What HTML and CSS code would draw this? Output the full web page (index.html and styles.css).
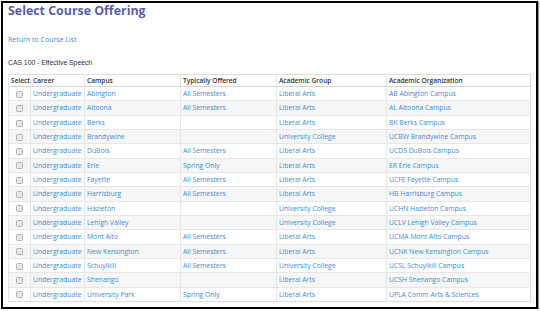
FILE: index.html
```html
<!DOCTYPE html>
<html lang="en">
<head>
    <meta charset="UTF-8">
    <title>Select Course Offering</title>
    <link rel="stylesheet" href="styles.css">
</head>
<body>
    <div class="frame">
        <h1 class="page-title">Select Course Offering</h1>
        <a class="back-link" href="#">Return to Course List</a>
        <p class="course-name">CAS 100 - Effective Speech</p>

        <table class="offerings">
            <thead>
                <tr>
                    <th class="col-select">Select</th>
                    <th class="col-career">Career</th>
                    <th class="col-campus">Campus</th>
                    <th class="col-offered">Typically Offered</th>
                    <th class="col-group">Academic Group</th>
                    <th>Academic Organization</th>
                </tr>
            </thead>
            <tbody>
                <tr><td class="col-select"><span class="check"></span></td><td><a href="#">Undergraduate</a></td><td><a href="#">Abington</a></td><td><a href="#">All Semesters</a></td><td><a href="#">Liberal Arts</a></td><td><a href="#">AB Abington Campus</a></td></tr>
                <tr><td class="col-select"><span class="check"></span></td><td><a href="#">Undergraduate</a></td><td><a href="#">Altoona</a></td><td><a href="#">All Semesters</a></td><td><a href="#">Liberal Arts</a></td><td><a href="#">AL Altoona Campus</a></td></tr>
                <tr><td class="col-select"><span class="check"></span></td><td><a href="#">Undergraduate</a></td><td><a href="#">Berks</a></td><td></td><td><a href="#">Liberal Arts</a></td><td><a href="#">BK Berks Campus</a></td></tr>
                <tr><td class="col-select"><span class="check"></span></td><td><a href="#">Undergraduate</a></td><td><a href="#">Brandywine</a></td><td></td><td><a href="#">University College</a></td><td><a href="#">UCBW Brandywine Campus</a></td></tr>
                <tr><td class="col-select"><span class="check"></span></td><td><a href="#">Undergraduate</a></td><td><a href="#">DuBois</a></td><td><a href="#">All Semesters</a></td><td><a href="#">Liberal Arts</a></td><td><a href="#">UCDS DuBois Campus</a></td></tr>
                <tr><td class="col-select"><span class="check"></span></td><td><a href="#">Undergraduate</a></td><td><a href="#">Erie</a></td><td><a href="#">Spring Only</a></td><td><a href="#">Liberal Arts</a></td><td><a href="#">ER Erie Campus</a></td></tr>
                <tr><td class="col-select"><span class="check"></span></td><td><a href="#">Undergraduate</a></td><td><a href="#">Fayette</a></td><td><a href="#">All Semesters</a></td><td><a href="#">Liberal Arts</a></td><td><a href="#">UCFE Fayette Campus</a></td></tr>
                <tr><td class="col-select"><span class="check"></span></td><td><a href="#">Undergraduate</a></td><td><a href="#">Harrisburg</a></td><td><a href="#">All Semesters</a></td><td><a href="#">Liberal Arts</a></td><td><a href="#">HB Harrisburg Campus</a></td></tr>
                <tr><td class="col-select"><span class="check"></span></td><td><a href="#">Undergraduate</a></td><td><a href="#">Hazleton</a></td><td></td><td><a href="#">University College</a></td><td><a href="#">UCHN Hazleton Campus</a></td></tr>
                <tr><td class="col-select"><span class="check"></span></td><td><a href="#">Undergraduate</a></td><td><a href="#">Lehigh Valley</a></td><td></td><td><a href="#">University College</a></td><td><a href="#">UCLV Lehigh Valley Campus</a></td></tr>
                <tr><td class="col-select"><span class="check"></span></td><td><a href="#">Undergraduate</a></td><td><a href="#">Mont Alto</a></td><td><a href="#">All Semesters</a></td><td><a href="#">Liberal Arts</a></td><td><a href="#">UCMA Mont Alto Campus</a></td></tr>
                <tr><td class="col-select"><span class="check"></span></td><td><a href="#">Undergraduate</a></td><td><a href="#">New Kensington</a></td><td><a href="#">All Semesters</a></td><td><a href="#">Liberal Arts</a></td><td><a href="#">UCNK New Kensington Campus</a></td></tr>
                <tr><td class="col-select"><span class="check"></span></td><td><a href="#">Undergraduate</a></td><td><a href="#">Schuylkill</a></td><td><a href="#">All Semesters</a></td><td><a href="#">University College</a></td><td><a href="#">UCSL Schuylkill Campus</a></td></tr>
                <tr><td class="col-select"><span class="check"></span></td><td><a href="#">Undergraduate</a></td><td><a href="#">Shenango</a></td><td></td><td><a href="#">Liberal Arts</a></td><td><a href="#">UCSH Shenango Campus</a></td></tr>
                <tr><td class="col-select"><span class="check"></span></td><td><a href="#">Undergraduate</a></td><td><a href="#">University Park</a></td><td><a href="#">Spring Only</a></td><td><a href="#">Liberal Arts</a></td><td><a href="#">UPLA Comm Arts &amp; Sciences</a></td></tr>
            </tbody>
        </table>
    </div>
</body>
</html>
```

FILE: styles.css
```css
body {
    margin: 0;
    background: #fff;
    font-family: "Open Sans", sans-serif;
}

.frame {
    box-sizing: border-box;
    height: 308px;
    margin: 1px 2px 0 1px;
    padding: 0 5px;
    border: 2px solid #000;
    box-shadow: 1px 1px 1px #999;
}

.page-title {
    margin: 0;
    font-size: 12.4px;
    line-height: 16px;
    font-weight: 700;
    color: #585fa6;
}

.back-link {
    display: block;
    margin-top: 16px;
    font-size: 7px;
    line-height: 9px;
    color: #3c8dd0;
    text-decoration: none;
}

.course-name {
    margin: 14px 0 0;
    font-family: "Liberation Sans", Arial, sans-serif;
    font-size: 6.8px;
    line-height: 9px;
    color: #333;
}

/* Offerings table */
.offerings {
    width: 523px;
    margin-top: 7px;
    border-collapse: collapse;
    table-layout: fixed;
    border: 1px solid #ddd;
    font-size: 6.8px;
}

.offerings th,
.offerings td {
    box-sizing: border-box;
    padding: 0 2px;
    text-align: left;
    white-space: nowrap;
    border-left: 1px solid #e6e6e6;
}

.offerings th {
    height: 12px;
    font-size: 6.6px;
    font-weight: 600;
    color: #333;
    border-bottom: 1px solid #d6d6d6;
}

.offerings td {
    height: 14.33px;
    border-top: 1px solid #e6e6e6;
}

.offerings tbody tr:nth-child(even) {
    background: #f6f6f6;
}

.offerings a {
    color: #3c8dd0;
    text-decoration: none;
}

.col-select { width: 22px; }
.col-career { width: 54px; }
.col-campus { width: 96px; }
.col-offered { width: 96px; }
.col-group { width: 110px; }

.offerings td.col-select {
    text-align: center;
}

.check {
    display: inline-block;
    box-sizing: border-box;
    width: 7px;
    height: 7px;
    vertical-align: middle;
    border: 1px solid #b3b3b3;
    border-radius: 1.5px;
    background: #e8e8e8;
}
```
